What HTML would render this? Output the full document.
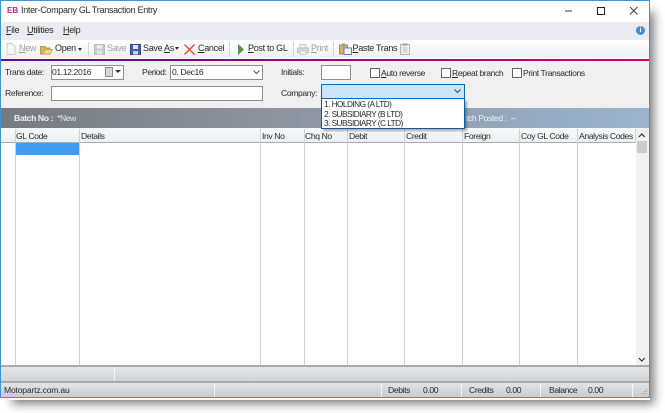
<!DOCTYPE html>
<html><head><meta charset="utf-8">
<style>
html,body{margin:0;padding:0;background:#fff;}
body{width:665px;height:413px;overflow:hidden;position:relative;font-family:"Liberation Sans",sans-serif;font-size:8.6px;letter-spacing:-.39px;color:#2a2a2a;}
.a{position:absolute;white-space:nowrap;}
.t{position:absolute;white-space:nowrap;line-height:11px;filter:blur(.25px);}
.m{font-size:9px;letter-spacing:-.3px;}
.g{color:#a0a0a0;}
.box{position:absolute;background:#fff;border:1px solid #8f8f8f;box-sizing:border-box;}
.cb{position:absolute;width:10px;height:10px;background:#fff;border:1px solid #666;box-sizing:border-box;top:68px;}
.v{position:absolute;width:1px;background:#cfd1d4;}
u{text-decoration:underline;}
svg{position:absolute;overflow:visible;}
</style></head><body>
<div class="a" style="left:8px;top:8px;width:642px;height:392px;box-shadow:4px 4px 9px rgba(0,0,0,.5);"></div>
<div class="a" style="left:0;top:0;width:650px;height:398px;background:#fff;border:1px solid #3f94d8;box-sizing:border-box;"></div>

<!-- title -->
<div class="t" style="left:7px;top:5px;font-weight:bold;color:#b0289a;font-size:8px;letter-spacing:0;">EB</div>
<div class="t" style="left:21px;top:5px;font-size:9px;letter-spacing:-.3px;">Inter-Company GL Transaction Entry</div>
<div class="a" style="left:565px;top:10px;width:7px;height:2px;background:#9a9a9a;"></div>
<div class="a" style="left:597px;top:7px;width:6px;height:6px;border:1px solid #222;"></div>
<svg style="left:629px;top:6px;" width="10" height="10"><path d="M1 1L8.5 8.5M8.5 1L1 8.5" stroke="#444" stroke-width="1" fill="none"/></svg>

<!-- menu -->
<div class="a" style="left:1px;top:22px;width:648px;height:18px;background:#e8ebef;"></div>
<div class="t m" style="left:6px;top:25px;"><u>F</u>ile</div>
<div class="t m" style="left:27px;top:25px;"><u>U</u>tilities</div>
<div class="t m" style="left:63px;top:25px;"><u>H</u>elp</div>
<div class="a" style="left:636px;top:26px;width:9px;height:9px;border-radius:50%;background:#4a8fd6;color:#fff;font-size:7px;font-weight:bold;line-height:9px;text-align:center;letter-spacing:0;">i</div>

<!-- toolbar -->
<div class="a" style="left:1px;top:40px;width:648px;height:18px;background:linear-gradient(#fff,#eff0f2);"></div>
<svg style="left:6px;top:43px;" width="10" height="12"><path d="M1 .5H6L9 3.5V11.5H1Z" fill="#f6f6f6" stroke="#d0d0d0"/></svg>
<div class="t g m" style="left:19px;top:43px;"><u>N</u>ew</div>
<svg style="left:40px;top:44px;" width="13" height="11"><path d="M.5 2.5H5L6 4H10V10H.5Z" fill="#d8b55c" stroke="#b8984a"/><path d="M3 10L5 5.5H12.5L10 10Z" fill="#f0d98c" stroke="#b89a50" stroke-width=".7"/></svg>
<div class="t m" style="left:55px;top:43px;">Open</div>
<div class="a" style="left:78px;top:48px;border:2.5px solid transparent;border-top:3px solid #333;border-bottom:0;"></div>
<div class="v" style="left:88px;top:42px;height:15px;background:#d4d6da;"></div>
<svg style="left:94px;top:44px;" width="11" height="11"><path d="M.5 .5H10.5V10.5H.5Z" fill="#c9cbce" stroke="#bbb"/><rect x="3" y="1" width="5" height="3.5" fill="#eee"/><rect x="3" y="6.5" width="5" height="4" fill="#e4e4e4"/></svg>
<div class="t g m" style="left:107px;top:43px;">Save</div>
<svg style="left:130px;top:43px;" width="11" height="12"><path d="M.5 1.5H10.5V11.5H.5Z" fill="#4a5cae" stroke="#3a4890"/><rect x="3" y="2" width="5" height="4" fill="#dfe6f5"/><rect x="3" y="8" width="5" height="3.5" fill="#c6d0ea"/></svg>
<div class="t m" style="left:143px;top:43px;">Save <u>A</u>s</div>
<div class="a" style="left:175px;top:47px;border:2.5px solid transparent;border-top:3px solid #333;border-bottom:0;"></div>
<svg style="left:184px;top:44px;" width="11" height="11"><path d="M.5 .5L10.5 10.5M10.5 .5L.5 10.5" stroke="#e2492a" stroke-width="1.3" fill="none"/></svg>
<div class="t m" style="left:198px;top:43px;"><u>C</u>ancel</div>
<div class="v" style="left:229px;top:42px;height:15px;background:#d4d6da;"></div>
<svg style="left:238px;top:44px;" width="7" height="11"><path d="M0 0L6 5.5L0 11Z" fill="#5a9048"/></svg>
<div class="t m" style="left:248px;top:43px;"><u>P</u>ost to GL</div>
<div class="v" style="left:293px;top:42px;height:15px;background:#d4d6da;"></div>
<svg style="left:297px;top:44px;" width="12" height="11"><path d="M3 .5H9V4H3Z" fill="#eee" stroke="#ccc"/><path d="M.5 4H11.5V8.5H.5Z" fill="#d4d6d8" stroke="#c0c0c0"/><path d="M3 7H9V10.5H3Z" fill="#f2f2f2" stroke="#ccc"/></svg>
<div class="t g m" style="left:311px;top:43px;"><u>P</u>rint</div>
<div class="v" style="left:333px;top:42px;height:15px;background:#d4d6da;"></div>
<svg style="left:339px;top:43px;" width="13" height="12"><path d="M.5 2H8.5V11H.5Z" fill="#d9b45c" stroke="#ad8d40"/><rect x="3" y=".5" width="3" height="3" fill="#999"/><path d="M5 5H12.5V11.5H5Z" fill="#f5f5f5" stroke="#6a7da2"/></svg>
<div class="t m" style="left:352.5px;top:43px;"><u>P</u>aste Trans</div>
<svg style="left:400px;top:43px;" width="10" height="12"><path d="M.5 1.5H9.5V11.5H.5Z" fill="#f2f2ee" stroke="#b4b4b4"/><path d="M3 .5H7V2.5H3ZM2.5 5H7.5M2.5 7H7.5M2.5 9H7.5" fill="none" stroke="#b0b0b0" stroke-width=".8"/></svg>

<!-- accent -->
<div class="a" style="left:1px;top:58.5px;width:648px;height:2.5px;background:linear-gradient(90deg,#5c0f94,#d4006c);"></div>

<!-- form -->
<div class="a" style="left:1px;top:61px;width:648px;height:47px;background:#f0f0f0;"></div>
<div class="t" style="left:5px;top:67px;">Trans date:</div>
<div class="box" style="left:51px;top:65px;width:73px;height:15px;"></div>
<div class="t" style="left:52px;top:67px;">01.12.2016</div>
<svg style="left:105px;top:67px;" width="8" height="10"><rect x=".5" y=".5" width="7" height="9" fill="#d4d7dc" stroke="#888"/></svg>
<div class="a" style="left:115px;top:70px;border:3px solid transparent;border-top:3.5px solid #334;border-bottom:0;"></div>
<div class="t" style="left:142px;top:67px;">Period:</div>
<div class="box" style="left:170px;top:65px;width:93px;height:15px;"></div>
<div class="t" style="left:172px;top:67px;">0. Dec16</div>
<svg style="left:253px;top:70px;" width="8" height="5"><path d="M.5 .5L3.5 3.5L6.5 .5" stroke="#555" fill="none"/></svg>
<div class="t" style="left:281px;top:67px;">Initials:</div>
<div class="box" style="left:321px;top:65px;width:30px;height:15px;"></div>
<div class="cb" style="left:370px;"></div>
<div class="t" style="left:381px;top:68px;"><u>A</u>uto reverse</div>
<div class="cb" style="left:441px;"></div>
<div class="t" style="left:452px;top:68px;"><u>R</u>epeat branch</div>
<div class="cb" style="left:512px;"></div>
<div class="t" style="left:523px;top:68px;">Print Transactions</div>
<div class="t" style="left:5px;top:88px;">Reference:</div>
<div class="box" style="left:51px;top:86px;width:212px;height:15px;"></div>
<div class="t" style="left:281px;top:88px;">Company:</div>

<!-- batch band -->
<div class="a" style="left:1px;top:108px;width:648px;height:20px;background:linear-gradient(90deg,#777b80 0%,#8b929b 40%,#9ab3cf 100%);"></div>
<div class="t" style="left:14px;top:113px;color:#eef0f2;font-weight:bold;">Batch No :</div>
<div class="t" style="left:57px;top:113px;color:#e6e8ea;">*New</div>
<div class="t" style="left:466px;top:113px;color:#f0f3f6;">tch Posted :&nbsp; --</div>

<!-- grid header -->
<div class="a" style="left:1px;top:128px;width:648px;height:14px;background:linear-gradient(#f8f9fa,#edeff2);"></div>
<div class="a" style="left:1px;top:142px;width:634px;height:1px;background:#a9adb2;"></div>
<div class="t" style="left:16px;top:131px;">GL Code</div>
<div class="t" style="left:81px;top:131px;">Details</div>
<div class="t" style="left:262px;top:131px;">Inv No</div>
<div class="t" style="left:305px;top:131px;">Chq No</div>
<div class="t" style="left:349px;top:131px;">Debit</div>
<div class="t" style="left:406px;top:131px;">Credit</div>
<div class="t" style="left:464px;top:131px;">Foreign</div>
<div class="t" style="left:521px;top:131px;">Coy GL Code</div>
<div class="t" style="left:579px;top:131px;">Analysis Codes</div>
<div class="v" style="left:15px;top:129px;height:236px;"></div>
<div class="v" style="left:79px;top:129px;height:236px;"></div>
<div class="v" style="left:260px;top:129px;height:236px;"></div>
<div class="v" style="left:304px;top:129px;height:236px;"></div>
<div class="v" style="left:347px;top:129px;height:236px;"></div>
<div class="v" style="left:404px;top:129px;height:236px;"></div>
<div class="v" style="left:462px;top:129px;height:236px;"></div>
<div class="v" style="left:519px;top:129px;height:236px;"></div>
<div class="v" style="left:577px;top:129px;height:236px;"></div>
<div class="v" style="left:635px;top:129px;height:14px;"></div>
<div class="a" style="left:16px;top:143px;width:63px;height:12px;background:#3f9bf4;"></div>

<!-- scrollbar -->
<div class="a" style="left:636px;top:128px;width:13px;height:237px;background:#f0f0f0;"></div>
<svg style="left:638px;top:133px;" width="8" height="5"><path d="M.8 4L3.8 1L6.8 4" stroke="#333" stroke-width="1.2" fill="none"/></svg>
<div class="a" style="left:637px;top:141px;width:10px;height:12px;background:#cdcdcd;"></div>
<svg style="left:638px;top:357px;" width="8" height="5"><path d="M.8 1L3.8 4L6.8 1" stroke="#333" stroke-width="1.2" fill="none"/></svg>

<!-- bottom bars -->
<div class="a" style="left:1px;top:365px;width:648px;height:2px;background:#a6a9ad;"></div>
<div class="a" style="left:1px;top:367px;width:648px;height:15px;background:linear-gradient(#e4e6e8,#d0d2d6);"></div>
<div class="a" style="left:114px;top:367px;width:1px;height:14px;background:#f4f4f4;"></div>
<div class="a" style="left:1px;top:381px;width:648px;height:2px;background:#a8abaf;"></div>
<div class="a" style="left:1px;top:383px;width:648px;height:14px;background:linear-gradient(#e2e4e7,#c9cbd0);"></div>
<div class="t" style="left:4px;top:385px;letter-spacing:-.2px;">Motopartz.com.au</div>
<div class="a" style="left:214px;top:383px;width:1px;height:14px;background:#f4f4f4;"></div>
<div class="a" style="left:381px;top:383px;width:1px;height:14px;background:#f4f4f4;"></div>
<div class="a" style="left:461px;top:383px;width:1px;height:14px;background:#f4f4f4;"></div>
<div class="a" style="left:540px;top:383px;width:1px;height:14px;background:#f4f4f4;"></div>
<div class="a" style="left:632px;top:383px;width:1px;height:14px;background:#f4f4f4;"></div>
<div class="t" style="left:388px;top:385px;">Debits</div>
<div class="t" style="left:423px;top:385px;">0.00</div>
<div class="t" style="left:469px;top:385px;">Credits</div>
<div class="t" style="left:506px;top:385px;">0.00</div>
<div class="t" style="left:549px;top:385px;">Balance</div>
<div class="t" style="left:588px;top:385px;">0.00</div>
<svg style="left:640px;top:388px;" width="8" height="8"><path d="M6 1h1v1h-1zM4 3h1v1h-1zM6 3h1v1h-1zM2 5h1v1h-1zM4 5h1v1h-1zM6 5h1v1h-1z" fill="#9a9da2"/></svg>

<!-- dropdown -->
<div class="a" style="left:321px;top:84px;width:144px;height:15px;background:#cce4f7;border:1px solid #0f6ab4;box-sizing:border-box;"></div>
<svg style="left:454px;top:89px;" width="8" height="5"><path d="M.5 .5L3.5 3.5L6.5 .5" stroke="#444" fill="none"/></svg>
<div class="a" style="left:321px;top:99px;width:144px;height:30px;background:#fff;border:1px solid #0f5aa0;border-top:0;box-sizing:border-box;box-shadow:2px 2px 2px rgba(0,0,0,.3);"></div>
<div class="t" style="left:324px;top:100px;line-height:9.5px;font-size:8.3px;letter-spacing:-.55px;">1. HOLDING (A LTD)<br>2. SUBSIDIARY (B LTD)<br>3. SUBSIDIARY (C LTD)</div>
</body></html>
